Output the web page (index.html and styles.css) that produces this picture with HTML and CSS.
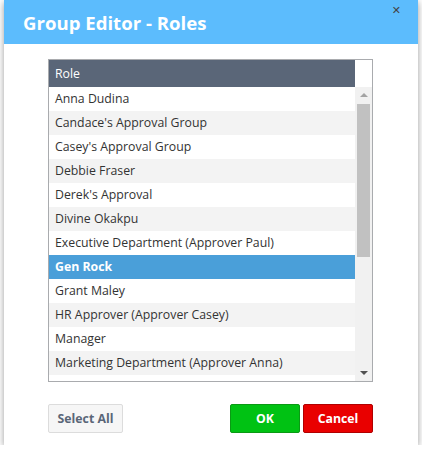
FILE: index.html
```html
<!DOCTYPE html>
<html>
<head>
<meta charset="utf-8">
<link rel="stylesheet" href="styles.css">
</head>
<body>
<div class="dialog">
  <div class="dialog-header">
    <h1>Group Editor - Roles</h1>
    <span class="close">&#x2715;</span>
  </div>
  <div class="dialog-body">
    <div class="listbox">
      <div class="list">
        <div class="list-head">Role</div>
        <div class="rows">
          <div class="row">Anna Dudina</div>
          <div class="row">Candace's Approval Group</div>
          <div class="row">Casey's Approval Group</div>
          <div class="row">Debbie Fraser</div>
          <div class="row">Derek's Approval</div>
          <div class="row">Divine Okakpu</div>
          <div class="row">Executive Department (Approver Paul)</div>
          <div class="row selected">Gen Rock</div>
          <div class="row">Grant Maley</div>
          <div class="row">HR Approver (Approver Casey)</div>
          <div class="row">Manager</div>
          <div class="row">Marketing Department (Approver Anna)</div>
          <div class="row">Operations Department</div>
        </div>
      </div>
      <div class="scrollbar">
        <div class="scroll-corner"></div>
        <div class="scroll-track">
          <span class="arrow up"></span>
          <div class="thumb"></div>
          <span class="arrow down"></span>
        </div>
      </div>
    </div>
    <div class="buttons">
      <button class="btn btn-light">Select All</button>
      <div class="spacer"></div>
      <button class="btn btn-ok">OK</button>
      <button class="btn btn-cancel">Cancel</button>
    </div>
  </div>
</div>
</body>
</html>
```

FILE: styles.css
```css
html, body {
  margin: 0;
  padding: 0;
  background: #fff;
  font-family: "Open Sans", "Noto Sans", sans-serif;
}
.dialog {
  margin: 0 4px;
  width: 414px;
  background: #fff;
  box-shadow: 0 2px 7px rgba(0, 0, 0, 0.4);
}
.dialog-header {
  height: 44px;
  background: #5cbcfd;
  position: relative;
  display: flex;
  align-items: center;
  padding-left: 19px;
}
.dialog-header h1 {
  margin: 0;
  color: #fff;
  font-size: 18.6px;
  font-weight: 700;
}
.close {
  position: absolute;
  right: 17px;
  top: 4px;
  color: #444;
  font-size: 11px;
  font-family: "DejaVu Sans", sans-serif;
}
.dialog-body {
  padding: 15px 45px 12px 44px;
}
.listbox {
  display: flex;
  height: 321px;
  border: 1px solid #a9abae;
  overflow: hidden;
}
.list {
  flex: 1;
  overflow: hidden;
}
.list-head {
  height: 27px;
  line-height: 27px;
  background: #5a6678;
  color: #fff;
  font-size: 12.3px;
  padding-left: 6px;
}
.row {
  height: 24px;
  line-height: 24px;
  font-size: 12.3px;
  color: #333;
  padding-left: 6px;
  white-space: nowrap;
}
.row:nth-child(even) {
  background: #f3f3f3;
}
.row.selected {
  background: #4a9fd9;
  color: #fff;
  font-weight: 700;
}
.scrollbar {
  width: 17px;
  display: flex;
  flex-direction: column;
}
.scroll-corner {
  height: 27px;
  background: #fff;
}
.scroll-track {
  flex: 1;
  background: #f1f1f1;
  display: flex;
  flex-direction: column;
  align-items: center;
  padding-top: 6px;
}
.arrow {
  width: 0;
  height: 0;
  border-left: 4px solid transparent;
  border-right: 4px solid transparent;
}
.arrow.up {
  border-bottom: 4px solid #a3a3a3;
}
.arrow.down {
  border-top: 4px solid #505050;
  margin-top: auto;
  margin-bottom: 6px;
}
.thumb {
  width: 13px;
  height: 153px;
  margin-top: 7px;
  background: #c1c1c1;
}
.buttons {
  display: flex;
  gap: 3px;
  margin-top: 22px;
}
.spacer {
  flex: 1;
}
.btn {
  height: 29px;
  border-radius: 2px;
  font-family: "Open Sans", "Noto Sans", sans-serif;
  font-size: 12.3px;
  font-weight: 700;
  padding: 0;
}
.btn-light {
  width: 75px;
  background: #f6f6f6;
  border: 1px solid #dcdcdc;
  color: #5a6678;
}
.btn-ok {
  width: 70px;
  background: #00c213;
  border: 1px solid #0a9a14;
  color: #fff;
}
.btn-cancel {
  width: 70px;
  background: #e90000;
  border: 1px solid #b00000;
  color: #fff;
}
```
